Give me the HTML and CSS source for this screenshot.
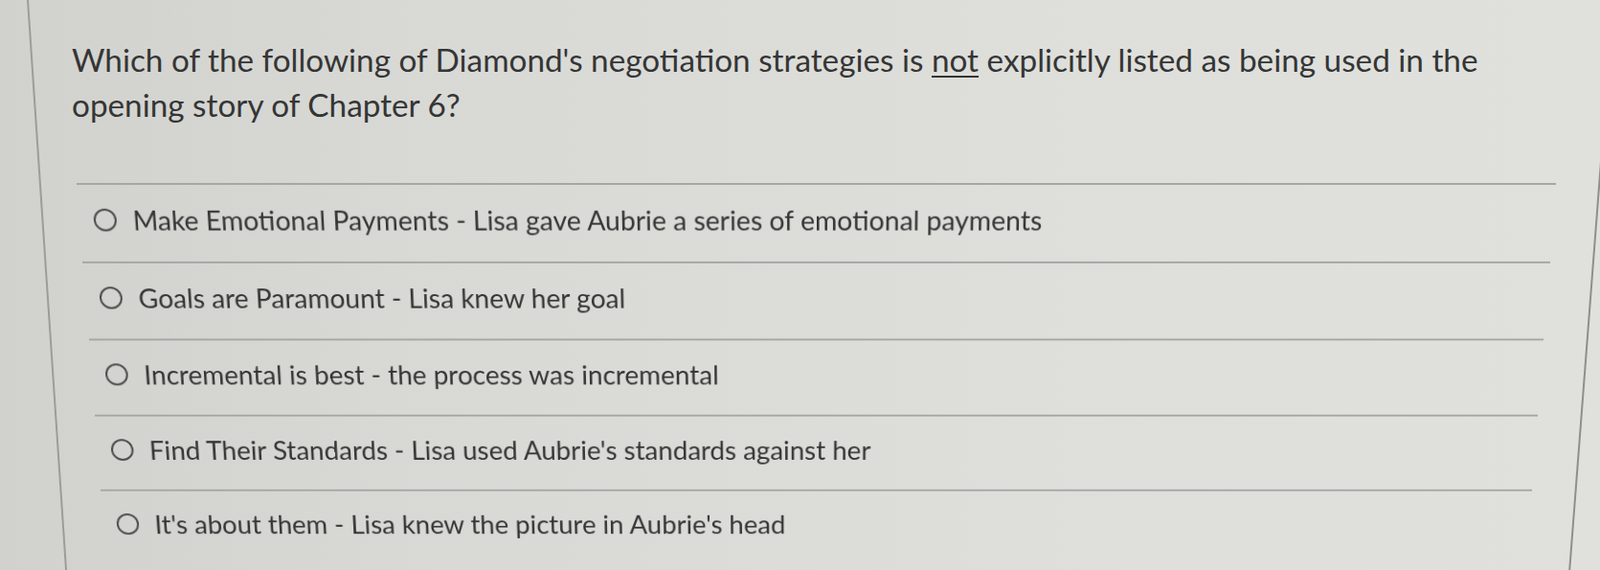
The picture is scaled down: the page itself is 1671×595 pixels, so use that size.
FILE: index.html
```html
<!DOCTYPE html>
<html lang="en">
<head>
<meta charset="utf-8">
<title>Quiz question</title>
<link rel="stylesheet" href="styles.css">
</head>
<body>
<div class="card">
  <div class="question">Which of the following of Diamond's negotiation strategies is <u>not</u> explicitly listed as being used in the opening story of Chapter 6?</div>
  <ul class="answers">
    <li class="answer"><span class="radio"></span><span class="label">Make Emotional Payments - Lisa gave Aubrie a series of emotional payments</span></li>
    <li class="answer"><span class="radio"></span><span class="label">Goals are Paramount - Lisa knew her goal</span></li>
    <li class="answer"><span class="radio"></span><span class="label">Incremental is best - the process was incremental</span></li>
    <li class="answer"><span class="radio"></span><span class="label">Find Their Standards - Lisa used Aubrie's standards against her</span></li>
    <li class="answer"><span class="radio"></span><span class="label">It's about them - Lisa knew the picture in Aubrie's head</span></li>
  </ul>
</div>
</body>
</html>
```

FILE: styles.css
```css
html, body {
  margin: 0;
  padding: 0;
}
body {
  width: 1671px;
  height: 595px;
  overflow: hidden;
  background: linear-gradient(90deg, #d1d2ce 0%, #d8d9d5 25%, #dedfdb 65%, #e0e1dd 100%);
  font-family: Lato, "Open Sans", sans-serif;
  color: #353535;
}
.card {
  position: relative;
  height: 595px;
  padding: 39px 0 0 75px;
  box-sizing: border-box;
}
/* slanted card edges, as seen in the photographed screen */
.card::before,
.card::after {
  content: "";
  position: absolute;
  top: 0;
  bottom: 0;
  width: 0;
  transform-origin: 0 0;
}
.card::before {
  left: 28px;
  border-left: 2px solid #9c9d9a;
  transform: skewX(3.85deg);
}
.card::after {
  left: 1684px;
  border-left: 2px solid #8e8f8c;
  transform: skewX(-4.4deg);
}
.question {
  font-size: 33.3px;
  line-height: 47px;
  max-width: 1530px;
}
.question u {
  text-decoration-thickness: 2px;
  text-underline-offset: 4px;
}
.answers {
  list-style: none;
  margin: 58px 0 0 5px;
  padding: 0;
  width: 1545px;
  transform-origin: 50% 0;
  transform: perspective(1000px) rotateX(-5.7deg);
}
.answer {
  display: flex;
  align-items: center;
  gap: 17px;
  height: 83px;
  border-top: 2px solid #a6a7a4;
  padding: 0 0 8px 15px;
  box-sizing: border-box;
  font-size: 28.5px;
}
.radio {
  width: 20px;
  height: 20px;
  border: 2px solid #4a4a4a;
  border-radius: 50%;
  flex: none;
}
.label {
  white-space: nowrap;
}
```
